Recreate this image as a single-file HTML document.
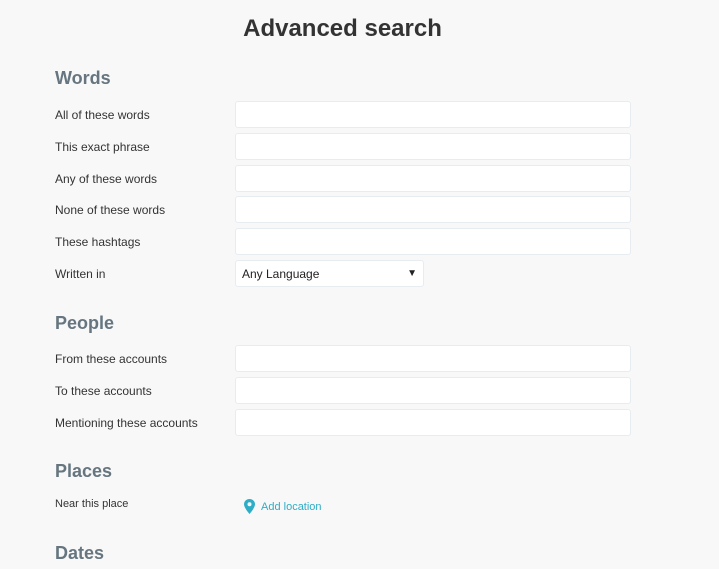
<!DOCTYPE html>
<html><head><style>
body{margin:0;width:719px;height:569px;background:#f8f8f8;font-family:"Liberation Sans",Arial,sans-serif;position:relative;overflow:hidden}
.a{position:absolute}
h1{position:absolute;margin:0;left:0;width:685px;text-align:center;top:15px;font-size:24px;font-weight:bold;color:#333}
h2{position:absolute;margin:0;left:55px;font-size:18px;font-weight:bold;color:#66757f}
.l{position:absolute;left:55px;font-size:12px;color:#333;line-height:14px}
.i{position:absolute;left:235px;width:394px;height:25px;background:#fff;border:1px solid #e6ecf0;border-radius:3px}
</style></head><body>
<h1>Advanced search</h1>
<h2 style="top:68px">Words</h2>
<div class="l" style="top:108px">All of these words</div><div class="i" style="top:101px"></div>
<div class="l" style="top:140px">This exact phrase</div><div class="i" style="top:133px"></div>
<div class="l" style="top:172px">Any of these words</div><div class="i" style="top:165px"></div>
<div class="l" style="top:203px">None of these words</div><div class="i" style="top:196px"></div>
<div class="l" style="top:235px">These hashtags</div><div class="i" style="top:228px"></div>
<div class="l" style="top:267px">Written in</div>
<div class="i" style="top:260px;width:187px;height:25px"><span class="a" style="left:6px;top:6px;font-size:12px;color:#222">Any Language</span><span class="a" style="right:6px;top:7px;font-size:10px;color:#222">▼</span></div>
<h2 style="top:313px">People</h2>
<div class="l" style="top:352px">From these accounts</div><div class="i" style="top:345px"></div>
<div class="l" style="top:384px">To these accounts</div><div class="i" style="top:377px"></div>
<div class="l" style="top:416px">Mentioning these accounts</div><div class="i" style="top:409px"></div>
<h2 style="top:461px">Places</h2>
<div class="l" style="top:497px;font-size:11px">Near this place</div>
<svg class="a" style="left:244px;top:499px" width="11" height="15" viewBox="0 0 11 15"><path d="M5.5 0C2.5 0 0 2.3 0 5.3 0 8.8 5.5 15 5.5 15S11 8.8 11 5.3C11 2.3 8.5 0 5.5 0z" fill="#2eadc7"/><circle cx="5.5" cy="5.2" r="2" fill="#f8f8f8"/></svg>
<div class="a" style="left:261px;top:501px;font-size:11px;color:#2eadc7">Add location</div>
<h2 style="top:543px">Dates</h2>
</body></html>
